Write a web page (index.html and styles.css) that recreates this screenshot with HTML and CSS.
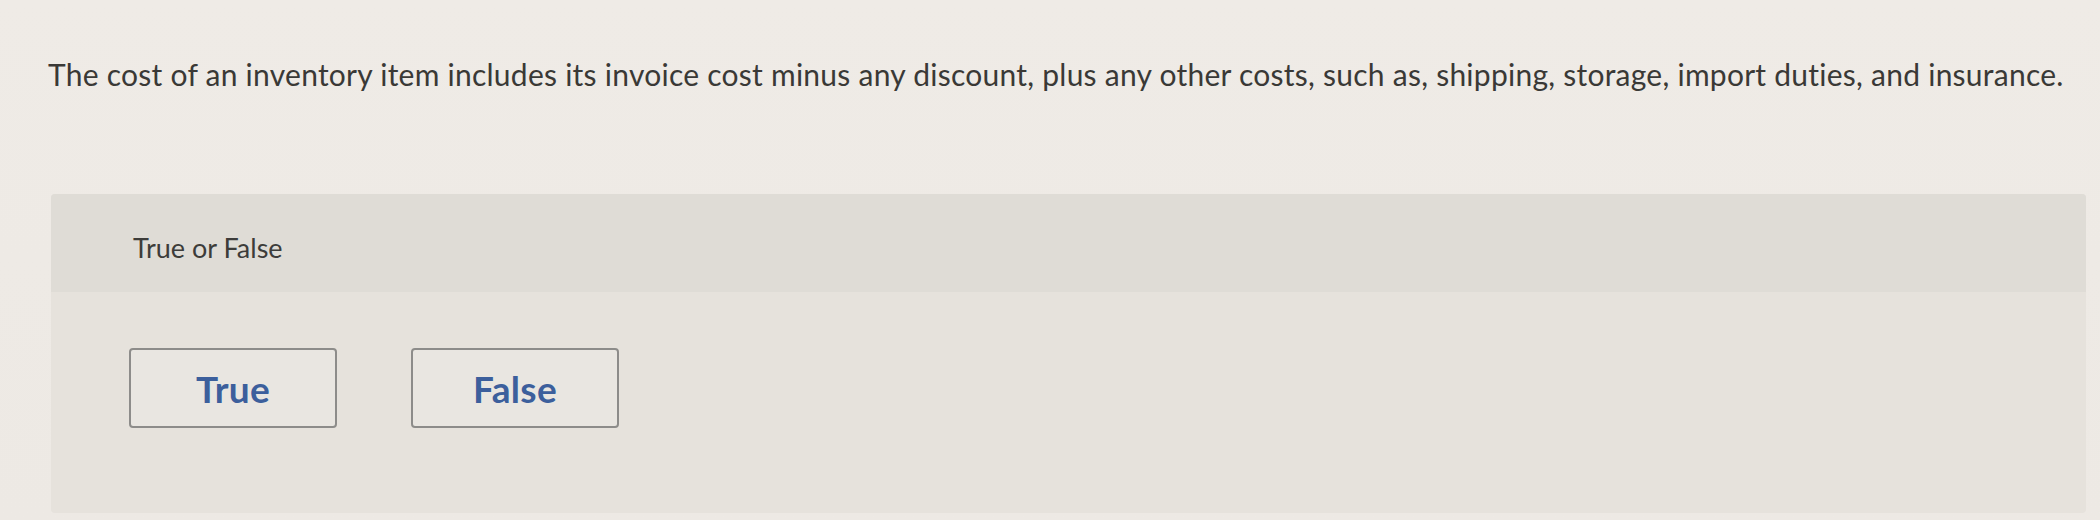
FILE: index.html
```html
<!DOCTYPE html>
<html lang="en">
<head>
<meta charset="utf-8">
<title>True or False</title>
<link rel="stylesheet" href="styles.css">
</head>
<body>
<div class="page">
  <p class="question">The cost of an inventory item includes its invoice cost minus any discount, plus any other costs, such as, shipping, storage, import duties, and insurance.</p>
  <section class="panel">
    <div class="panel-head">True or False</div>
    <div class="panel-body">
      <button class="choice" type="button">True</button>
      <button class="choice" type="button">False</button>
    </div>
  </section>
</div>
</body>
</html>
```
FILE: styles.css
```css
html, body {
  margin: 0;
  padding: 0;
}
body {
  width: 2100px;
  height: 520px;
  overflow: hidden;
  background: linear-gradient(180deg, #efebe6 0%, #ede9e4 100%);
  font-family: "Lato", "Liberation Sans", sans-serif;
  color: #3b3a38;
}
.page {
  display: flex;
  flex-direction: column;
  padding: 54px 0 0 48px;
}
.question {
  margin: 0;
  font-size: 30px;
  line-height: 40px;
  letter-spacing: 0.25px;
  color: #3a3936;
}
.panel {
  margin: 100px 0 0 3px;
  width: 2035px;
  height: 319px;
  background: #e6e2dc;
  border-radius: 4px;
  display: flex;
  flex-direction: column;
}
.panel-head {
  height: 98px;
  box-sizing: border-box;
  padding: 8px 0 0 82px;
  display: flex;
  align-items: center;
  background: #dfdcd6;
  border-radius: 4px 4px 0 0;
  font-size: 27px;
  color: #3d3c3a;
}
.panel-body {
  display: flex;
  gap: 74px;
  padding: 56px 0 0 78px;
}
.choice {
  width: 208px;
  height: 80px;
  background: #e9e6e1;
  border: 2px solid #8d8c8a;
  border-radius: 4px;
  font-family: "Lato", "Liberation Sans", sans-serif;
  font-weight: 700;
  font-size: 37px;
  letter-spacing: 0.3px;
  color: #3c5f9c;
  padding: 0;
}
```
